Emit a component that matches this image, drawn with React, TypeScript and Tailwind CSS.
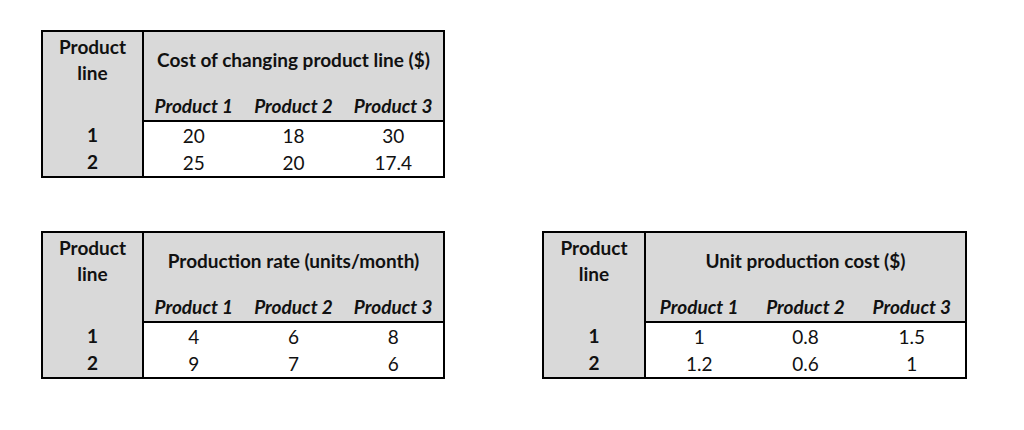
import React from "react";

interface TableProps {
  title: string;
  rows: string[][];
  width: string;
  labelWidth: string;
}

function ProductTable({ title, rows, width, labelWidth }: TableProps) {
  return (
    <div className={`flex border-2 border-black h-[148px] ${width}`}>
      {/* row label column */}
      <div className={`${labelWidth} shrink-0 bg-[#d9d9d9] border-r-2 border-black flex flex-col`}>
        <div className="h-[90px] pt-[2px] text-center font-bold leading-[26px]">
          Product
          <br />
          line
        </div>
        {rows.map((_, i) => (
          <div key={i} className="h-[27px] flex items-center justify-center font-bold">
            {i + 1}
          </div>
        ))}
      </div>

      <div className="flex-1 flex flex-col">
        <div className="h-[90px] bg-[#d9d9d9] border-b-2 border-black flex flex-col">
          <div className="h-[56px] flex items-center justify-center font-bold">{title}</div>
          <div className="h-[32px] pt-1 grid grid-cols-3 items-center">
            {["Product 1", "Product 2", "Product 3"].map((p) => (
              <div key={p} className="text-center font-bold italic">
                {p}
              </div>
            ))}
          </div>
        </div>
        <div className="flex-1 bg-white">
          {rows.map((row, i) => (
            <div key={i} className="h-[27px] grid grid-cols-3 items-center">
              {row.map((v, j) => (
                <div key={j} className="text-center">
                  {v}
                </div>
              ))}
            </div>
          ))}
        </div>
      </div>
    </div>
  );
}

export default function App() {
  return (
    <div className="w-[1024px] h-[430px] bg-white text-[#111] font-['Lato',sans-serif] text-[19px] pl-[41px] pt-[30px]">
      <ProductTable
        title="Cost of changing product line ($)"
        rows={[
          ["20", "18", "30"],
          ["25", "20", "17.4"],
        ]}
        width="w-[404px]"
        labelWidth="w-[101px]"
      />
      <div className="mt-[53px] flex gap-[97px]">
        <ProductTable
          title="Production rate (units/month)"
          rows={[
            ["4", "6", "8"],
            ["9", "7", "6"],
          ]}
          width="w-[404px]"
          labelWidth="w-[101px]"
        />
        <ProductTable
          title="Unit production cost ($)"
          rows={[
            ["1", "0.8", "1.5"],
            ["1.2", "0.6", "1"],
          ]}
          width="w-[425px]"
          labelWidth="w-[102px]"
        />
      </div>
    </div>
  );
}
